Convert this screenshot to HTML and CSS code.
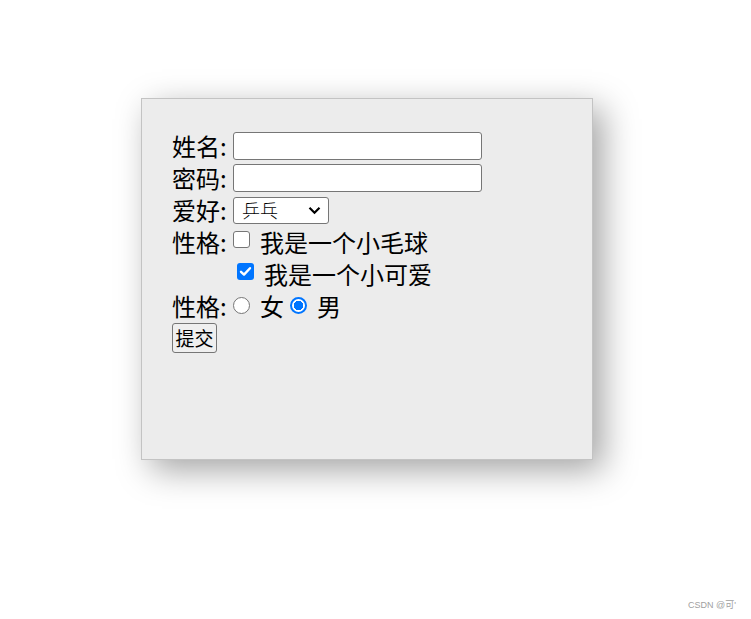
FILE: index.html
```html
<!DOCTYPE html>
<html lang="zh">
<head>
<meta charset="utf-8">
<title>表单</title>
<link rel="stylesheet" href="styles.css">
</head>
<body>
<div class="box">
  <form class="form">
    <div class="row">
      <span class="label">姓名:</span>
      <input class="text" type="text">
    </div>
    <div class="row">
      <span class="label">密码:</span>
      <input class="text" type="password">
    </div>
    <div class="row">
      <span class="label">爱好:</span>
      <select class="sel">
        <option>乒乓</option>
        <option>篮球</option>
      </select>
    </div>
    <div class="row">
      <span class="label">性格:</span>
      <input class="check" type="checkbox">
      <span class="opt">我是一个小毛球</span>
    </div>
    <div class="row indent">
      <input class="check" type="checkbox" checked>
      <span class="opt">我是一个小可爱</span>
    </div>
    <div class="row">
      <span class="label">性格:</span>
      <input class="radio" type="radio" name="sex">
      <span class="opt opt-short">女</span>
      <input class="radio" type="radio" name="sex" checked>
      <span class="opt">男</span>
    </div>
    <div class="row">
      <button class="submit" type="button">提交</button>
    </div>
  </form>
</div>
<div class="watermark">CSDN @可'</div>
</body>
</html>
```

FILE: styles.css
```css
html, body {
  margin: 0;
  padding: 0;
  background: #ffffff;
}

body {
  font-family: "Noto Sans CJK SC", "Noto Sans", sans-serif;
  color: #000;
  width: 751px;
  height: 619px;
  position: relative;
  overflow: hidden;
}

.box {
  box-sizing: border-box;
  width: 452px;
  height: 362px;
  margin: 98px 0 0 141px;
  padding: 31px 0 0 30px;
  border: 1px solid #c3c3c3;
  background: #ececec;
  box-shadow: 10px 10px 32px rgba(0, 0, 0, 0.36);
}

.form {
  margin: 0;
  display: flex;
  flex-direction: column;
}

.row {
  height: 32px;
  display: flex;
  align-items: center;
  font-size: 24px;
  line-height: 32px;
}

.label {
  width: 55px;
  margin-right: 6px;
  white-space: nowrap;
}

.indent {
  padding-left: 65px;
}

.text {
  box-sizing: border-box;
  width: 249px;
  height: 28px;
  margin: 0;
  padding: 2px 4px;
  border: 1px solid #767676;
  border-radius: 3px;
  background: #fff;
  font-size: 16px;
}

.sel {
  -webkit-appearance: none;
  appearance: none;
  box-sizing: border-box;
  width: 96px;
  height: 27px;
  margin: 0;
  padding: 0 0 0 8px;
  border: 1px solid #767676;
  border-radius: 3px;
  background: #fff url("data:image/svg+xml,%3Csvg xmlns='http://www.w3.org/2000/svg' width='13' height='9' viewBox='0 0 13 9'%3E%3Cpath d='M1.5 1.8 6.5 6.8 11.5 1.8' fill='none' stroke='%23000' stroke-width='2.2'/%3E%3C/svg%3E") no-repeat right 7px center;
  font-family: "Noto Sans CJK SC", sans-serif;
  font-size: 18px;
  font-weight: 300;
  line-height: 25px;
  color: #000;
}

.check,
.radio {
  -webkit-appearance: none;
  appearance: none;
  box-sizing: border-box;
  width: 17px;
  height: 17px;
  margin: 0 10px 0 0;
  flex: none;
  border: 1px solid #767676;
  background: #fff;
}

.check {
  border-radius: 3px;
  margin-top: -5px;
}

.check:checked {
  border: none;
  background: #0075ff url("data:image/svg+xml,%3Csvg xmlns='http://www.w3.org/2000/svg' width='17' height='17' viewBox='0 0 17 17'%3E%3Cpath d='M4 8.8 7 11.6 13 5.2' fill='none' stroke='%23fff' stroke-width='2.4' stroke-linecap='round' stroke-linejoin='round'/%3E%3C/svg%3E") no-repeat center;
}

.radio {
  border-radius: 50%;
  margin-top: -2px;
}

.radio:checked {
  border: 2px solid #0075ff;
  background: radial-gradient(circle, #0075ff 0 4.5px, #fff 5px);
}

.opt {
  white-space: nowrap;
}

.opt-short {
  margin-right: 6px;
}

.submit {
  box-sizing: border-box;
  width: 45px;
  height: 30px;
  margin: 0;
  padding: 0;
  border: 1px solid #767676;
  border-radius: 3px;
  background: #efefef;
  font-family: "Noto Sans CJK SC", sans-serif;
  font-size: 19px;
  line-height: 28px;
  color: #000;
}

.watermark {
  position: absolute;
  left: 688px;
  top: 598px;
  font-family: "Liberation Sans", "Noto Sans CJK SC", sans-serif;
  font-size: 9px;
  color: #a0a0a0;
  white-space: nowrap;
}
```
